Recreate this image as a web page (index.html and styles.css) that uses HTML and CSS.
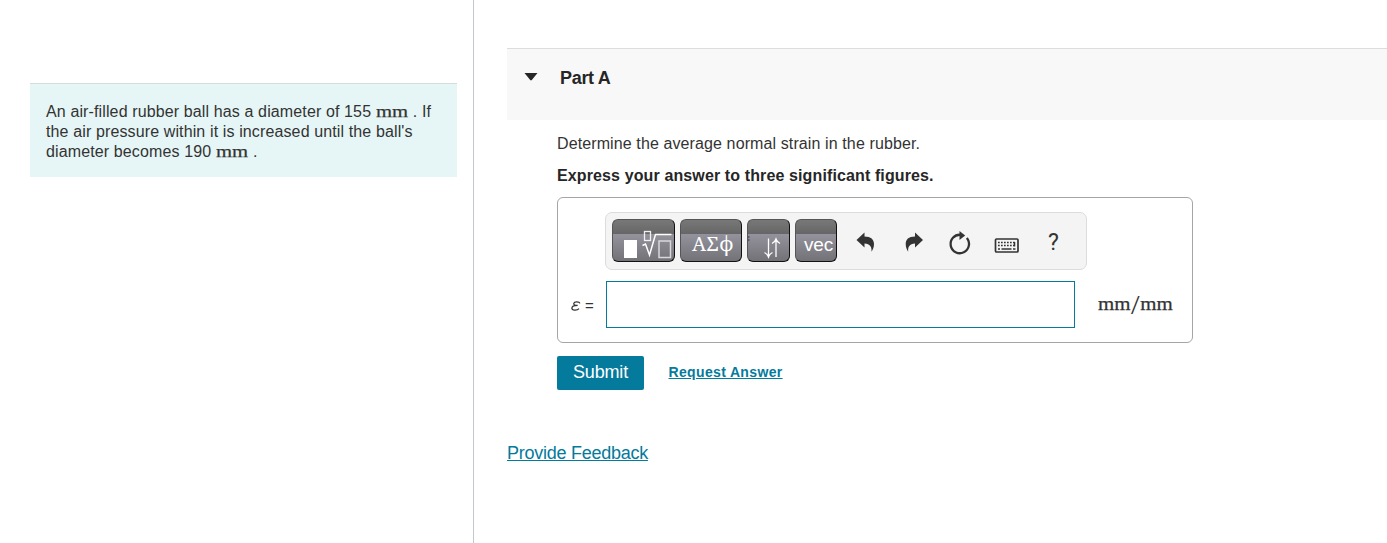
FILE: index.html
```html
<!DOCTYPE html>
<html lang="en">
<head>
<meta charset="utf-8">
<title>Part A</title>
<link rel="stylesheet" href="styles.css">
</head>
<body>
<div class="page">
  <aside class="side">
    <div class="problem">
      <div>An air-filled rubber ball has a diameter of 155 <span class="unit">mm</span> . If</div>
      <div>the air pressure within it is increased until the ball's</div>
      <div>diameter becomes 190 <span class="unit">mm</span> .</div>
    </div>
  </aside>
  <main class="main">
    <header class="part-head">
      <svg class="caret" width="14" height="8" viewBox="0 0 14 8"><path d="M0.5 0H13.5L7.8 7Q7 7.9 6.2 7Z" fill="#262626"/></svg>
      <h2 class="part-title">Part A</h2>
    </header>
    <div class="part-body">
      <p class="question">Determine the average normal strain in the rubber.</p>
      <p class="instruction">Express your answer to three significant figures.</p>
      <div class="answer">
        <div class="toolbar">
          <button class="tool tool-wide">
            <svg width="61" height="41" viewBox="0 0 61 41" fill="none" stroke="#fff">
              <rect x="11" y="21" width="13" height="18" fill="#fff" stroke="none"/>
              <rect x="31.500" y="12.500" width="6" height="9" stroke="#f0f0f2" stroke-width="1.300"/>
              <path d="M29.500 26.500l3-1.500 4 11 6-20.500H58.500" stroke-width="1.500"/>
              <rect x="46" y="22" width="11.500" height="16.500" stroke="#d8d8dc" stroke-width="1.500"/>
            </svg>
          </button>
          <button class="tool tool-greek"><span>ΑΣϕ</span></button>
          <button class="tool tool-arrows">
            <svg width="41" height="41" viewBox="0 0 41 41" fill="none" stroke="#fff" stroke-width="1.300">
              <path d="M20.500 19.500V38M16.500 33.500q3 1.500 4 4.500 1-3 4-4.500M28 38V20M24 24.500q3-1.500 4-4.500 1 3 4 4.500"/>
              <path d="M0 18h1.500M0 21h1.500" stroke="#4a4a4e"/>
            </svg>
          </button>
          <button class="tool tool-vec"><span>vec</span></button>
          <svg class="icons" width="210" height="42" viewBox="850 220 210 42" fill="#333">
            <path d="M856.500 240L864.500 232.500V236.500C871 236.500 874 239.500 874 244C874 247.500 872.700 250 871.500 251.800C872 247 870 243.800 864.500 243.600V247.500Z"/>
            <path d="M923 240L915 232.500V236.500C908.500 236.500 905.700 239.500 905.700 244C905.700 247.500 907 250 908.200 251.800C907.700 247 909.500 243.800 915 243.600V247.500Z"/>
            <path d="M960.500 234.800A9.200 9.200 0 1 0 966.800 238" fill="none" stroke="#333" stroke-width="2.300"/>
            <path d="M959.500 231L965.200 235.500L959.500 240Z"/>
            <rect x="995.500" y="239" width="22.500" height="13" rx="1" fill="none" stroke="#333" stroke-width="1.700"/>
            <path d="M998 242.500H1016M998 245.500H1014" stroke="#333" stroke-width="1.500" stroke-dasharray="1.700 1.300"/>
            <path d="M1014.500 242V246.500" stroke="#333" stroke-width="1.500"/>
            <path d="M998 249H1000M1001.500 249H1011.500M1013 249H1015.500" stroke="#333" stroke-width="1.300"/>
          </svg>
          <span class="help">?</span>
        </div>
        <div class="entry">
          <div class="symbol"><svg width="10" height="10" viewBox="0 0 9 10" preserveAspectRatio="none" fill="none" stroke="#333" stroke-width="1.150"><path d="M8 2.300C7.600.6 3 .3 2.500 2.300 2.200 3.700 3.500 4.400 6 4.400 3.200 4.400.8 5.200.8 7.200.8 9.600 5.500 9.800 7.200 7.600"/></svg><span>=</span></div>
          <input class="field" type="text" aria-label="Strain">
          <span class="unit-big">mm<span class="slash">/</span>mm</span>
        </div>
      </div>
      <div class="actions">
        <button class="submit">Submit</button>
        <a class="request">Request Answer</a>
      </div>
    </div>
    <a class="feedback">Provide Feedback</a>
  </main>
</div>
</body>
</html>
```
FILE: styles.css
```css
* { box-sizing: border-box; }
body {
  margin: 0;
  background: #fff;
  color: #333;
  font-family: "Liberation Sans", Arial, sans-serif;
  font-size: 16px;
  overflow: hidden;
}
.page { display: flex; width: 1387px; height: 543px; }
.side { width: 474px; padding: 83px 16px 0 30px; border-right: 1px solid #c3c8ce; }
.problem {
  height: 94px;
  padding: 18px 0 0 16px;
  border-top: 1px solid #d4dcdc;
  background: #e6f6f6;
  line-height: 20px;
  letter-spacing: 0.125px;
  white-space: nowrap;
}
.unit {
  display: inline-block;
  width: 32.500px;
  font-family: "Liberation Serif", serif;
  font-size: 17.500px;
  line-height: 16px;
  letter-spacing: 0;
  transform: scaleX(1.180);
  transform-origin: left;
  -webkit-text-stroke: 0.250px #333;
}
.main { flex: 1; padding: 48px 0 0 33px; }
.part-head {
  display: flex;
  align-items: flex-start;
  height: 72px;
  padding: 0 0 0 17px;
  border-top: 1px solid #dcdcdc;
  background: #f8f8f8;
}
.caret { margin-top: 24px; }
.part-title { margin: 18px 0 0 22px; color: #262626; font-size: 18px; line-height: 22px; letter-spacing: -0.300px; }
.part-body { padding: 14px 0 0 50px; white-space: nowrap; }
.question, .instruction { margin: 0; line-height: 20px; letter-spacing: 0.110px; }
.instruction { margin-top: 12px; color: #262626; font-weight: bold; letter-spacing: 0.120px; }
.answer {
  width: 636px;
  height: 146px;
  margin-top: 11px;
  padding: 14px 0 0 13px;
  border: 1px solid #a5a5a5;
  border-radius: 6px;
}
.toolbar {
  display: flex;
  width: 482px;
  height: 58px;
  margin-left: 34px;
  padding: 6px;
  border: 1px solid #dcdcdc;
  border-radius: 7px;
  background: #f4f4f4;
}
.tool {
  display: flex;
  flex: none;
  width: 43px;
  height: 43px;
  margin: 0 5px 0 0;
  padding: 0;
  overflow: hidden;
  border: 1px solid #555;
  border-right-color: #111;
  border-bottom-color: #111;
  border-radius: 6px;
  background: linear-gradient(#787878, #666 14px, #94939d 14px, #727277);
  color: #fff;
}
.tool svg { flex: none; margin-top: -1px; }
.tool-wide { width: 63px; }
.tool-greek { width: 62px; padding: 12px 0 0 11px; font: 20px/24px "Noto Serif", "DejaVu Serif", serif; }
.tool-greek span { letter-spacing: 0.500px; }
.tool-vec { width: 42px; margin-right: 13px; padding: 13px 0 0 8px; font: 19px/24px "Liberation Sans", sans-serif; letter-spacing: -0.200px; }
.icons { flex: none; margin-top: 1px; }
.help { margin: 11px 0 0 -12px; font: 23px/26px Roboto, sans-serif; }
.entry { display: flex; align-items: flex-start; margin-top: 11px; }
.symbol { display: flex; width: 35px; padding-top: 16px; line-height: 18px; font-size: 15px; }
.symbol svg { margin-top: 4px; }
.symbol span { margin-left: 4px; }
.field { width: 469px; height: 47px; border: 1px solid #047a9c; outline: 0; background: #fff; }
.unit-big {
  margin: 11px 0 0 23px;
  font: 19px/24px "Liberation Serif", serif;
  transform: scaleX(1.100);
  transform-origin: left;
  -webkit-text-stroke: 0.250px #333;
}
.slash { display: inline-block; margin: 0 0.500px; font-size: 28px; line-height: 20px; vertical-align: -4px; -webkit-text-stroke: 0; }
.actions { display: flex; height: 34px; margin-top: 13px; }
.submit {
  width: 87px;
  height: 34px;
  padding: 0 0 3px;
  border: 0;
  border-radius: 2px;
  background: #047a9c;
  color: #fff;
  font: 18px/22px "Liberation Sans", sans-serif;
  letter-spacing: -0.150px;
}
.request { margin: 7px 0 0 24.500px; color: #047a9c; font-size: 14px; font-weight: bold; line-height: 18px; letter-spacing: 0.350px; text-decoration: underline; }
.feedback { display: inline-block; margin-top: 52px; color: #047a9c; font-size: 18px; line-height: 22px; letter-spacing: -0.260px; text-decoration: underline; }
```
